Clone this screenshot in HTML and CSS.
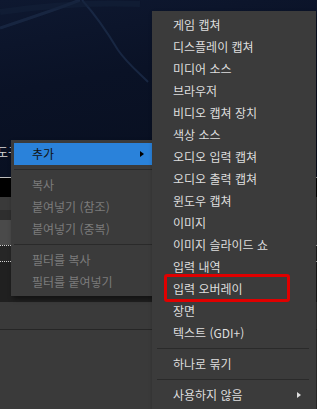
FILE: index.html
```html
<!DOCTYPE html>
<html lang="ko">
<head>
    <meta charset="UTF-8">
    <meta name="viewport" content="width=device-width, initial-scale=1.0">
    <title>소스 추가</title>
    <link rel="stylesheet" href="styles.css">
</head>
<body>
    <!--뒤쪽 화면 (미리보기 + 도구)-->
    <section class="scene">
        <div class="preview">
            <svg class="streaks" width="317" height="175" viewBox="0 0 317 175">
                <path d="M0 28 C 30 18, 60 8, 80 0" stroke="#1c2c48" stroke-width="3" fill="none" opacity=".7"/>
                <path d="M82 0 C 100 20, 112 40, 118 50 C 126 62, 138 72, 148 82" stroke="#1c2c48" stroke-width="2" fill="none" opacity=".8"/>
                <path d="M0 12 C 40 6, 90 2, 140 4" stroke="#14213a" stroke-width="6" fill="none" opacity=".5"/>
            </svg>
            <span class="tool-label">도구</span>
        </div>
        <div class="tool-line"></div>
        <div class="tool-black"></div>
        <div class="tool-row mid"></div>
        <div class="tool-row dark"></div>
        <div class="tool-row light"></div>
        <div class="dots"></div>
        <div class="tool-row deep"></div>
        <div class="dots"></div>
        <div class="tool-row panel"></div>
        <div class="dock"></div>
        <div class="dock-line"></div>
        <div class="dock rest"></div>
    </section>

    <!--우클릭 메뉴-->
    <ul class="menu context">
        <li class="item active">추가<span class="arrow dark"></span></li>
        <li class="sep"></li>
        <li class="item off">복사</li>
        <li class="item off">붙여넣기 (참조)</li>
        <li class="item off">붙여넣기 (중복)</li>
        <li class="sep"></li>
        <li class="item off">필터를 복사</li>
        <li class="item off">필터를 붙여넣기</li>
    </ul>

    <!--추가 하위 메뉴-->
    <ul class="menu sub">
        <li class="item">게임 캡쳐</li>
        <li class="item">디스플레이 캡쳐</li>
        <li class="item">미디어 소스</li>
        <li class="item">브라우저</li>
        <li class="item">비디오 캡쳐 장치</li>
        <li class="item">색상 소스</li>
        <li class="item">오디오 입력 캡쳐</li>
        <li class="item">오디오 출력 캡쳐</li>
        <li class="item">윈도우 캡쳐</li>
        <li class="item">이미지</li>
        <li class="item">이미지 슬라이드 쇼</li>
        <li class="item">입력 내역</li>
        <li class="item marked">입력 오버레이</li>
        <li class="item">장면</li>
        <li class="item">텍스트 (GDI+)</li>
        <li class="sep"></li>
        <li class="item">하나로 묶기</li>
        <li class="sep"></li>
        <li class="item">사용하지 않음<span class="arrow"></span></li>
    </ul>
</body>
</html>
```

FILE: styles.css
```css
html{
    box-sizing: border-box;
    font-family: "Noto Sans CJK KR", "Noto Sans", sans-serif;
    font-size: 12px;
}
*,
*::before,
*::after{
    box-sizing: inherit;
}

body{
    margin: 0;
    width: 317px;
    height: 409px;
    overflow: hidden;
    position: relative;
    background-color: #3a3a3a;
}

/* 뒤쪽 화면 */
.scene{
    display: flex;
    flex-direction: column;
}
.preview{
    height: 177px;
    position: relative;
    background: linear-gradient(170deg, #0e1830 0%, #0a1226 40%, #080f1f 100%);
}
.streaks{
    display: block;
}
.tool-label{
    position: absolute;
    left: -3px;
    top: 145px;
    color: #d8d8d8;
    line-height: 14px;
}
.tool-line{
    height: 1px;
    background-color: #bdbdbd;
}
.tool-black{
    height: 19px;
    background-color: #000;
}
.tool-row{
    height: 13px;
}
.tool-row.mid{ background-color: #3a3a3a; }
.tool-row.dark{ height: 10px; background-color: #2e2e2e; }
.tool-row.light{ height: 25px; background-color: #4a4a4a; }
.tool-row.deep{ height: 15px; background-color: #262626; }
.tool-row.panel{ height: 40px; background-color: #202020; }
.dots{
    height: 1px;
    background-image: linear-gradient(90deg, #d0d0d0 50%, transparent 50%);
    background-size: 2px 1px;
    background-color: #262626;
}
.dock{
    height: 27px;
    background-color: #3a3a3a;
}
.dock-line{
    height: 1px;
    background-color: #262626;
}
.dock.rest{
    height: 79px;
}

/* 메뉴 */
.menu{
    position: absolute;
    margin: 0;
    padding: 3px;
    list-style: none;
    background-color: #3b3b3b;
    box-shadow: 2px 3px 5px rgba(0,0,0,.45);
}
.context{
    left: 11px;
    top: 140px;
    width: 160px;
}
.sub{
    left: 152px;
    top: 11px;
    width: 164px;
    height: 398px;
    padding-left: 0;
    padding-right: 0;
}
.item{
    position: relative;
    height: 22px;
    line-height: 22px;
    padding-left: 18px;
    color: #dedede;
    white-space: nowrap;
}
.sub .item{
    padding-left: 21px;
}
.item.active{
    background-color: #2a82da;
    color: #111;
}
.item.off{
    color: #7c7c7c;
}
.sep{
    height: 9px;
    position: relative;
}
.sep::after{
    content: "";
    position: absolute;
    left: 0;
    right: 0;
    top: 4px;
    height: 1px;
    background-color: #2a2a2a;
}
.sub .sep::after{
    left: 5px;
    right: 7px;
}
.arrow{
    position: absolute;
    top: 8px;
    left: 145px;
    width: 0;
    height: 0;
    border-top: 3.5px solid transparent;
    border-bottom: 3.5px solid transparent;
    border-left: 4px solid #dedede;
}
.arrow.dark{
    left: 126px;
    border-left-color: #000;
}
.marked::after{
    content: "";
    position: absolute;
    left: 12px;
    top: -4px;
    width: 126px;
    height: 28px;
    border: 3px solid #e00000;
    border-radius: 3px;
}
```
